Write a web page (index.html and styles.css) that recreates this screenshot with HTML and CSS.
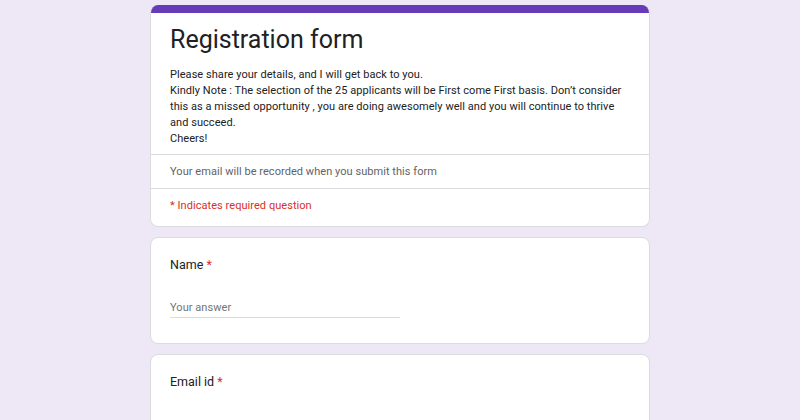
FILE: index.html
```html
<!DOCTYPE html>
<html lang="en">
<head>
<meta charset="utf-8">
<title>Registration form</title>
<link rel="stylesheet" href="styles.css">
</head>
<body>
<main class="form">
  <section class="card header-card">
    <div class="accent"></div>
    <div class="header-main">
      <h1 class="title">Registration form</h1>
      <div class="desc">Please share your details, and I will get back to you.<br>Kindly Note : The selection of the 25 applicants will be First come First basis. Don’t consider this as a missed opportunity , you are doing awesomely well and you will continue to thrive and succeed.<br>Cheers!</div>
    </div>
    <div class="header-row email-note">Your email will be recorded when you submit this form</div>
    <div class="header-row required-note">* Indicates required question</div>
  </section>

  <section class="card question">
    <div class="q-label">Name <span class="star">*</span></div>
    <div class="answer">Your answer</div>
  </section>

  <section class="card question">
    <div class="q-label">Email id <span class="star">*</span></div>
    <div class="answer">Your answer</div>
  </section>
</main>
</body>
</html>
```

FILE: styles.css
```css
html, body {
  margin: 0;
  padding: 0;
}
body {
  background: #ede7f6;
  font-family: Roboto, "Liberation Sans", sans-serif;
  color: #202124;
}
.form {
  width: 500px;
  margin: 0 auto;
  padding-top: 5px;
  display: flex;
  flex-direction: column;
  gap: 10px;
}
.card {
  background: #fff;
  border: 1px solid #dadce0;
  border-radius: 8px;
  box-sizing: border-box;
  overflow: hidden;
}
.header-card {
  border-top: none;
}
.accent {
  height: 8px;
  background: #673ab7;
}
.header-main {
  padding: 11px 19px 7px;
  border-bottom: 1px solid #dadce0;
}
.title {
  margin: 0;
  font-size: 25px;
  line-height: 32px;
  font-weight: 400;
  color: #202124;
}
.desc {
  margin-top: 11px;
  font-size: 11px;
  line-height: 16px;
  letter-spacing: 0.05px;
  color: #202124;
}
.header-row {
  font-size: 11px;
  line-height: 16px;
  letter-spacing: 0.05px;
  padding: 9px 19px 8px;
}
.email-note {
  color: #5f6368;
  border-bottom: 1px solid #dadce0;
}
.required-note {
  color: #d93025;
  padding-bottom: 12px;
}
.question {
  padding: 17px 19px 25px;
}
.q-label {
  font-size: 12.5px;
  line-height: 20px;
  color: #202124;
}
.star {
  color: #d93025;
}
.answer {
  margin-top: 25px;
  width: 230px;
  font-size: 11px;
  line-height: 16px;
  letter-spacing: 0.05px;
  color: #70757a;
  padding-bottom: 1px;
  border-bottom: 1px solid #dadce0;
}
```
